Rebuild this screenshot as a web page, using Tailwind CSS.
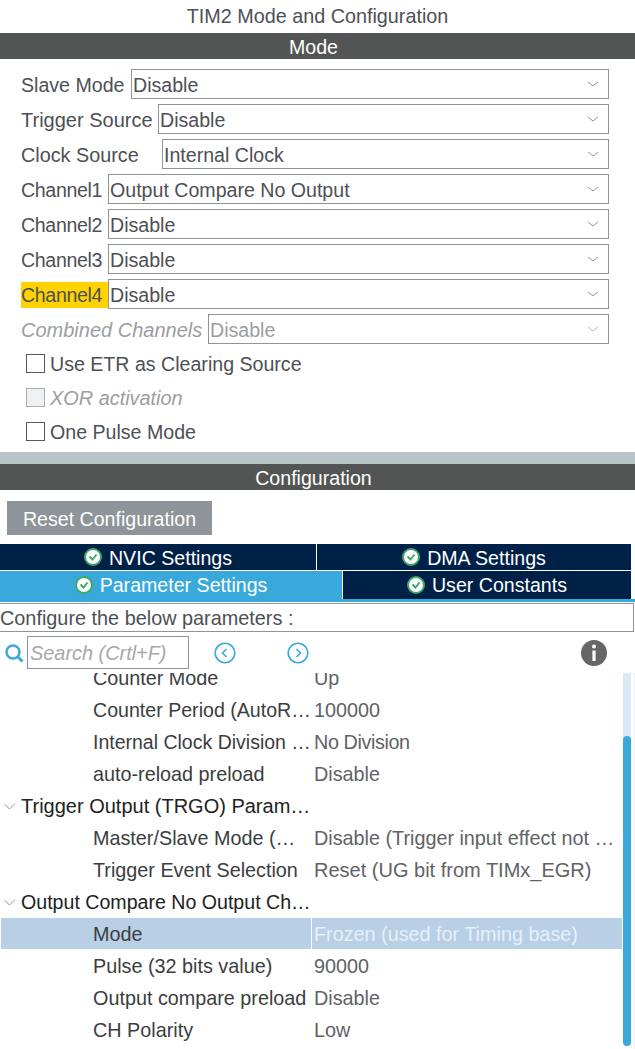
<!DOCTYPE html>
<html lang="en">
  <head>
    <meta charset="UTF-8" />
    <title>TIM2 Mode and Configuration</title>
    <script src="https://cdn.jsdelivr.net/npm/@tailwindcss/browser@4"></script>
  </head>
  <body class="w-[635px] h-[1049px] overflow-hidden bg-white font-['Liberation_Sans',Arial,sans-serif] text-[19.6px] leading-[24px] text-[#4d5055]">
    <h1 class="h-[33px] pb-[2px] flex items-center justify-center text-[19.8px] font-normal">TIM2 Mode and Configuration</h1>
    <div class="h-[26px] pt-[2px] pr-[8px] flex items-center justify-center bg-[#535554] text-white">Mode</div>

    <!-- Mode -->
    <div class="h-[393px] flex flex-col gap-[5px] pt-[10px] pl-[21px] pr-[26px]">
      <div class="flex items-center h-[30px]">
        <label class="w-[110px] mt-[2px]">Slave Mode</label>
        <div class="flex-1 h-[30px] flex items-center justify-between border border-[#8e9499] pl-[1px] pr-[9px]"><span class="mt-[2px]">Disable</span>
          <svg class="w-[12px] h-[8px]" viewBox="0 0 12 8" fill="none" stroke="#8e9499"><path d="M1 2l5 4 5-4" /></svg>
        </div>
      </div>
      <div class="flex items-center h-[30px]">
        <label class="w-[137px] mt-[2px] text-[20px]">Trigger Source</label>
        <div class="flex-1 h-[30px] flex items-center justify-between border border-[#8e9499] pl-[1px] pr-[9px]"><span class="mt-[2px]">Disable</span>
          <svg class="w-[12px] h-[8px]" viewBox="0 0 12 8" fill="none" stroke="#8e9499"><path d="M1 2l5 4 5-4" /></svg>
        </div>
      </div>
      <div class="flex items-center h-[30px]">
        <label class="w-[141px] mt-[2px] text-[19.8px]">Clock Source</label>
        <div class="flex-1 h-[30px] flex items-center justify-between border border-[#8e9499] pl-[1px] pr-[9px]"><span class="mt-[2px]">Internal Clock</span>
          <svg class="w-[12px] h-[8px]" viewBox="0 0 12 8" fill="none" stroke="#8e9499"><path d="M1 2l5 4 5-4" /></svg>
        </div>
      </div>
      <div class="flex items-center h-[30px]">
        <label class="w-[87px] mt-[2px] tracking-[-0.35px]">Channel1</label>
        <div class="flex-1 h-[30px] flex items-center justify-between border border-[#8e9499] pl-[1px] pr-[9px]"><span class="mt-[2px]">Output Compare No Output</span>
          <svg class="w-[12px] h-[8px]" viewBox="0 0 12 8" fill="none" stroke="#8e9499"><path d="M1 2l5 4 5-4" /></svg>
        </div>
      </div>
      <div class="flex items-center h-[30px]">
        <label class="w-[87px] mt-[2px] tracking-[-0.35px]">Channel2</label>
        <div class="flex-1 h-[30px] flex items-center justify-between border border-[#8e9499] pl-[1px] pr-[9px]"><span class="mt-[2px]">Disable</span>
          <svg class="w-[12px] h-[8px]" viewBox="0 0 12 8" fill="none" stroke="#8e9499"><path d="M1 2l5 4 5-4" /></svg>
        </div>
      </div>
      <div class="flex items-center h-[30px]">
        <label class="w-[87px] mt-[2px] tracking-[-0.35px]">Channel3</label>
        <div class="flex-1 h-[30px] flex items-center justify-between border border-[#8e9499] pl-[1px] pr-[9px]"><span class="mt-[2px]">Disable</span>
          <svg class="w-[12px] h-[8px]" viewBox="0 0 12 8" fill="none" stroke="#8e9499"><path d="M1 2l5 4 5-4" /></svg>
        </div>
      </div>
      <div class="flex items-center h-[30px]">
        <label class="w-[87px] h-[26px] mt-[2px] flex items-center bg-[#ffd200] tracking-[-0.35px]">Channel4</label>
        <div class="flex-1 h-[30px] flex items-center justify-between border border-[#8e9499] pl-[1px] pr-[9px]"><span class="mt-[2px]">Disable</span>
          <svg class="w-[12px] h-[8px]" viewBox="0 0 12 8" fill="none" stroke="#8e9499"><path d="M1 2l5 4 5-4" /></svg>
        </div>
      </div>
      <div class="flex items-center h-[30px] text-[#9b9ea1]">
        <label class="w-[187px] mt-[2px] italic text-[20px]">Combined Channels</label>
        <div class="flex-1 h-[30px] flex items-center justify-between border border-[#8e9499] pl-[1px] pr-[9px]"><span class="mt-[2px]">Disable</span>
          <svg class="w-[12px] h-[8px]" viewBox="0 0 12 8" fill="none" stroke="#b5b9bc"><path d="M1 2l5 4 5-4" /></svg>
        </div>
      </div>
      <div class="flex flex-col gap-[15px] pt-[5px] pl-[5px]">
        <div class="flex items-center h-[19px] gap-[5px]">
          <span class="w-[19px] h-[19px] border border-[#55585c]"></span>Use ETR as Clearing Source
        </div>
        <div class="flex items-center h-[19px] gap-[5px] italic text-[19.9px] text-[#9b9ea1]">
          <span class="w-[19px] h-[19px] border border-[#a9adb1] bg-[#eff0f1]"></span>XOR activation
        </div>
        <div class="flex items-center h-[19px] gap-[5px]">
          <span class="w-[19px] h-[19px] border border-[#55585c]"></span>One Pulse Mode
        </div>
      </div>
    </div>

    <div class="h-[12px] bg-[#b8c3ca]"></div>
    <div class="h-[26px] pt-[2px] pr-[8px] flex items-center justify-center bg-[#535554] text-white">Configuration</div>

    <!-- Configuration -->
    <div class="h-[54px] pt-[11px] pl-[7px]">
      <button class="w-[205px] h-[34px] pt-[2px] bg-[#8e9499] text-white">Reset Configuration</button>
    </div>

    <div class="w-[631px] flex h-[27px] gap-[1px] border-b border-white">
      <div class="w-[316px] flex items-center justify-center gap-[7px] bg-[#002147] text-white">
        <svg class="w-[18px] h-[18px]" viewBox="0 0 18 18" fill="none"><circle cx="9" cy="9" r="8" fill="#fff" stroke="#3fa768" stroke-width="2" /><path d="M5.5 8.5l3 3 4-5" stroke="#3fa768" stroke-width="2" /></svg>
        <span class="mt-[2px]">NVIC Settings</span>
      </div>
      <div class="flex-1 flex items-center justify-center gap-[7px] bg-[#002147] text-white">
        <svg class="w-[18px] h-[18px]" viewBox="0 0 18 18" fill="none"><circle cx="9" cy="9" r="8" fill="#fff" stroke="#3fa768" stroke-width="2" /><path d="M5.5 8.5l3 3 4-5" stroke="#3fa768" stroke-width="2" /></svg>
        <span class="mt-[2px]">DMA Settings</span>
      </div>
    </div>
    <div class="h-[31px] flex items-start border-b-[3px] border-[#39a9dc]">
      <div class="w-[342px] h-[28px] flex items-center justify-center gap-[7px] bg-[#39a9dc] text-white">
        <svg class="w-[18px] h-[18px]" viewBox="0 0 18 18" fill="none"><circle cx="9" cy="9" r="8" fill="#fff" stroke="#3fa768" stroke-width="2" /><path d="M5.5 8.5l3 3 4-5" stroke="#3fa768" stroke-width="2" /></svg>
        Parameter Settings
      </div>
      <div class="w-[288px] ml-[1px] h-[28px] flex items-center justify-center gap-[7px] bg-[#002147] text-white">
        <svg class="w-[18px] h-[18px]" viewBox="0 0 18 18" fill="none"><circle cx="9" cy="9" r="8" fill="#fff" stroke="#3fa768" stroke-width="2" /><path d="M5.5 8.5l3 3 4-5" stroke="#3fa768" stroke-width="2" /></svg>
        User Constants
      </div>
    </div>

    <div class="w-[634px] h-[29px] mt-[1px] flex items-center border border-l-0 border-[#8e9499] text-[19.85px]">Configure the below parameters :</div>

    <div class="relative h-[41px] flex items-center">
      <svg class="ml-[5px] w-[19px] h-[19px] mt-[1px]" viewBox="0 0 19 19" fill="none" stroke="#39a9dc" stroke-width="2.4"><circle cx="8" cy="8" r="6.5" /><path d="M12.5 12.5l5 5" stroke-width="3" /></svg>
      <div class="ml-[3px] w-[162px] h-[33px] flex items-center pl-[2px] border border-[#8e9499] italic text-[19.9px] text-[#a6a9ac]">Search (Crtl+F)</div>
      <svg class="ml-[25px] w-[22px] h-[22px]" viewBox="0 0 22 22" fill="none" stroke="#39a9dc" stroke-width="1.6"><circle cx="11" cy="11" r="9.8" /><path d="M12.5 7l-4 4 4 4" /></svg>
      <svg class="ml-[51px] w-[22px] h-[22px]" viewBox="0 0 22 22" fill="none" stroke="#39a9dc" stroke-width="1.6"><circle cx="11" cy="11" r="9.8" /><path d="M9.5 7l4 4-4 4" /></svg>
      <svg class="ml-[272px] w-[26px] h-[26px]" viewBox="0 0 26 26"><circle cx="13" cy="13" r="13" fill="#666" /><circle cx="13" cy="6.5" r="2" fill="#fff" /><rect x="11.4" y="10.5" width="3.2" height="10.5" fill="#fff" /></svg>
    </div>

    <!-- Parameter tree -->
    <div class="h-[376px] flex overflow-hidden">
      <div class="w-[623px] -mt-[11px] text-[19.8px] whitespace-nowrap text-[#3b3d40]">
        <div class="h-[32px] flex items-center"><span class="w-[314px] pl-[93px]">Counter Mode</span><span class="text-[#5f6266]">Up</span></div>
        <div class="h-[32px] flex items-center"><span class="w-[314px] pl-[93px] text-[19.6px]">Counter Period (AutoR…</span><span class="text-[#5f6266]">100000</span></div>
        <div class="h-[32px] flex items-center"><span class="w-[314px] pl-[93px] text-[19.5px]">Internal Clock Division …</span><span class="tracking-[-0.4px] text-[#5f6266]">No Division</span></div>
        <div class="h-[32px] flex items-center"><span class="w-[314px] pl-[93px]">auto-reload preload</span><span class="text-[#5f6266]">Disable</span></div>
        <div class="h-[32px] flex items-center text-[20px] text-[#222]">
          <svg class="ml-[4px] mr-[6px] w-[11px] h-[7px]" viewBox="0 0 11 7" fill="none" stroke="#8e9499"><path d="M.5 1l5 5 5-5" /></svg>Trigger Output (TRGO) Param…
        </div>
        <div class="h-[32px] flex items-center"><span class="w-[314px] pl-[93px]">Master/Slave Mode (…</span><span class="text-[#5f6266]">Disable (Trigger input effect not …</span></div>
        <div class="h-[32px] flex items-center"><span class="w-[314px] pl-[93px]">Trigger Event Selection</span><span class="text-[20px] text-[#5f6266]">Reset (UG bit from TIMx_EGR)</span></div>
        <div class="h-[32px] flex items-center text-[19.6px] text-[#222]">
          <svg class="ml-[4px] mr-[6px] w-[11px] h-[7px]" viewBox="0 0 11 7" fill="none" stroke="#8e9499"><path d="M.5 1l5 5 5-5" /></svg>Output Compare No Output Ch…
        </div>
        <div class="h-[32px] flex items-start pl-[1px] pr-[1px]">
          <span class="w-[310px] h-[31px] flex items-center pl-[92px] bg-[#b8cfe6]">Mode</span>
          <span class="flex-1 h-[31px] ml-[1px] flex items-center pl-[2px] bg-[#b8cfe6] text-[#e6f0f8]">Frozen (used for Timing base)</span>
        </div>
        <div class="h-[32px] flex items-center"><span class="w-[314px] pl-[93px]">Pulse (32 bits value)</span><span class="text-[#5f6266]">90000</span></div>
        <div class="h-[32px] flex items-center"><span class="w-[314px] pl-[93px]">Output compare preload</span><span class="text-[#5f6266]">Disable</span></div>
        <div class="h-[32px] flex items-center"><span class="w-[314px] pl-[93px]">CH Polarity</span><span class="text-[#5f6266]">Low</span></div>
      </div>
      <div class="w-[8px] h-[373px] pt-[63px] bg-[#dbe9f6] rounded-b-[4px]">
        <div class="h-[310px] rounded-[4px] bg-[#39a9dc]"></div>
      </div>
      <div class="w-[3px]"></div>
      <div class="w-[1px] bg-[#f0f0f0]"></div>
    </div>
  </body>
</html>
